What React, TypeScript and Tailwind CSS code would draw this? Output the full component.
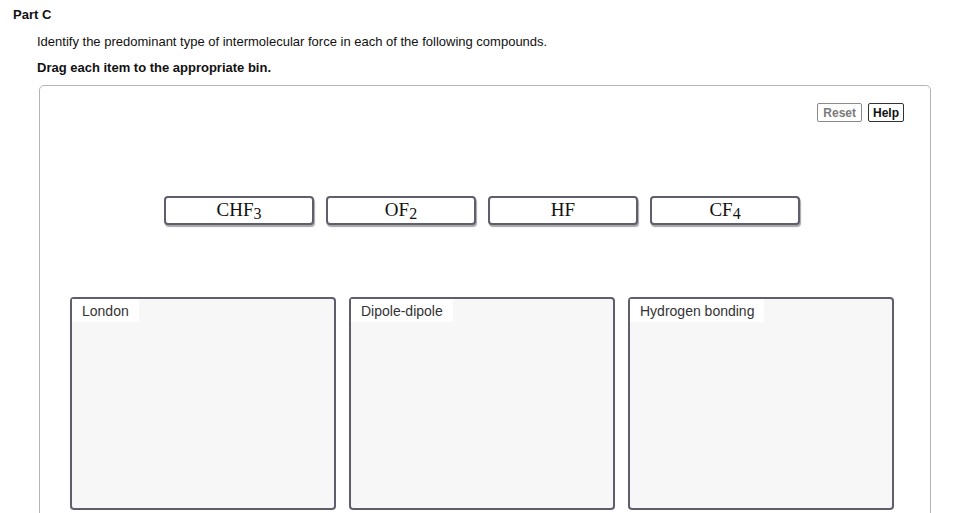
import React from "react";

function Item({ base, sub }: { base: string; sub?: string }) {
  return (
    <div className="w-[150px] h-[29px] flex items-center justify-center rounded-[4px] border-2 border-[#5e5e6c] bg-white shadow-[1px_2px_1px_rgba(0,0,0,0.35)] font-['Liberation_Serif',serif] text-[19px] text-[#111] leading-none">
      <span className="relative top-[-1px]">
        {base}
        {sub && <span className="relative top-[3px] text-[16px]">{sub}</span>}
      </span>
    </div>
  );
}

function Bin({ label }: { label: string }) {
  return (
    <div className="w-[266px] h-[213px] rounded-[4px] border-2 border-[#5e5e6c] bg-[#f7f7f7] flex flex-col items-start">
      <div className="bg-white h-[23px] px-[10px] flex items-center text-[14px] text-[#333] leading-none">
        {label}
      </div>
    </div>
  );
}

export default function App() {
  return (
    <div className="font-['Liberation_Sans',Arial,sans-serif] text-[13px] text-[#111] leading-[15px] bg-white h-[513px] overflow-hidden">
      <div className="pl-[13px] pt-[7px] font-bold">Part C</div>
      <p className="pl-[37px] mt-[12px]">
        Identify the predominant type of intermolecular force in each of the following compounds.
      </p>
      <p className="pl-[37px] mt-[11px] font-bold">Drag each item to the appropriate bin.</p>
      <div className="ml-[39px] mt-[10px] w-[892px] h-[460px] border border-[#b4b4b4] rounded-t-[5px] pt-[17px]">
        <div className="flex justify-end gap-[6px] pr-[26px]">
          <button className="h-[19px] px-[5px] border border-[#8a8a8a] rounded-[2px] text-[12px] font-bold text-[#7a7a7a] leading-none">
            Reset
          </button>
          <button className="h-[19px] px-[4px] border border-[#333] rounded-[2px] text-[12px] font-bold text-[#111] leading-none">
            Help
          </button>
        </div>
        <div className="flex gap-[12px] pl-[124px] mt-[74px]">
          <Item base="CHF" sub="3" />
          <Item base="OF" sub="2" />
          <Item base="HF" />
          <Item base="CF" sub="4" />
        </div>
        <div className="flex gap-[13px] pl-[30px] mt-[72px]">
          <Bin label="London" />
          <Bin label="Dipole-dipole" />
          <Bin label="Hydrogen bonding" />
        </div>
      </div>
    </div>
  );
}
